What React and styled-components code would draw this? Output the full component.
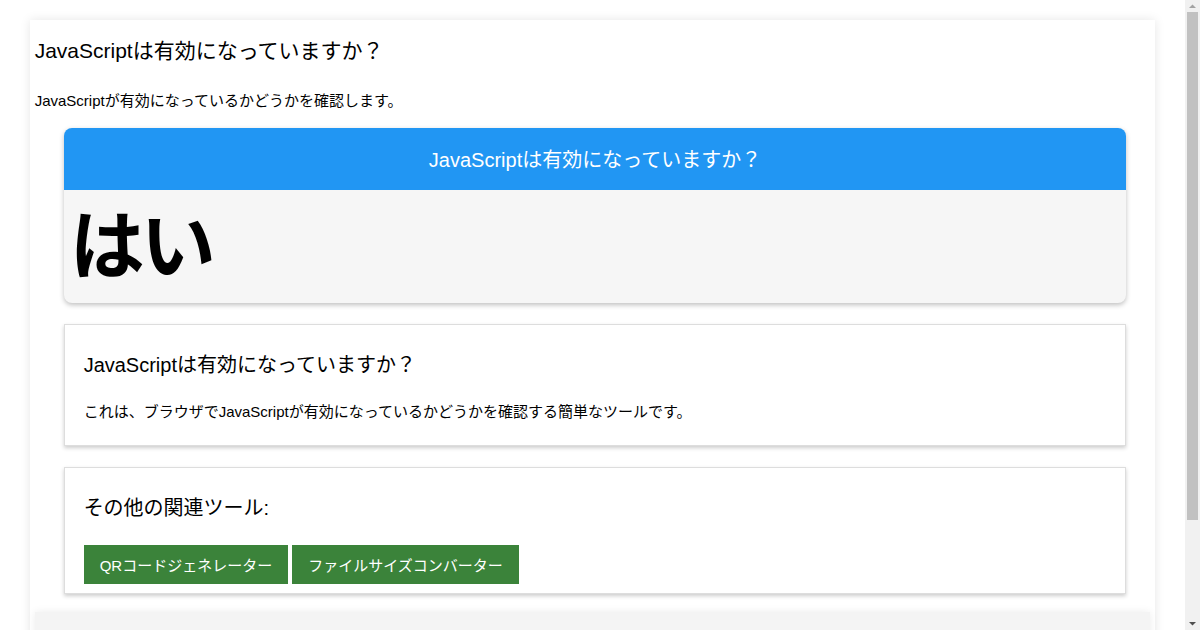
import React from 'react';
import styled, { createGlobalStyle } from 'styled-components';

const GlobalStyle = createGlobalStyle`
    html, body {
        margin: 0;
        padding: 0;
        background: #fff;
        color: #000;
        font-family: "Liberation Sans", Arial, "Noto Sans CJK JP", sans-serif;
    }
    body {
        width: calc(100% - 15px);
        overflow-x: hidden;
    }
`;

const Container = styled.div`
    width: 95%;
    margin: 20px auto 0;
    padding: 5px;
    box-sizing: border-box;
    background: #fff;
    box-shadow: 0 0 10px rgba(0, 0, 0, 0.1);
`;

const PageTitle = styled.h1`
    font-size: 21px;
    font-weight: normal;
    margin: 13px 0 0;
    line-height: 26px;
`;

const Lead = styled.p`
    font-size: 15px;
    margin: 27px 0 0;
    line-height: 20px;
`;

const Cards = styled.div`
    display: flex;
    flex-direction: column;
    gap: 21px;
    margin: 17px 24px 0 29px;
`;

const ResultCard = styled.div`
    border-radius: 8px;
    overflow: hidden;
    background: #f6f6f6;
    box-shadow: 0 2px 5px rgba(0, 0, 0, 0.25);
`;

const ResultHeader = styled.div`
    background: #2196f3;
    color: #fff;
    font-size: 20px;
    height: 62px;
    padding-bottom: 2px;
    box-sizing: border-box;
    display: flex;
    align-items: center;
    justify-content: center;
`;

const Answer = styled.div`
    height: 113px;
    box-sizing: border-box;
    padding: 1px 0 0 6px;
    font-size: 75px;
    line-height: 100px;
    font-weight: bold;
    letter-spacing: -4px;
    font-family: "Noto Sans CJK JP", sans-serif;
`;

const Box = styled.section`
    background: #fff;
    border: 1px solid #ddd;
    box-shadow: 0 2px 4px rgba(0, 0, 0, 0.2);
    padding: 28px 19px ${(p) => (p.$tight ? '9px' : '23px')};
`;

const BoxTitle = styled.h2`
    font-size: 20px;
    font-weight: normal;
    margin: 0;
    line-height: 24px;
`;

const BoxText = styled.p`
    font-size: 15px;
    margin: 25px 0 0;
    line-height: 20px;
`;

const ToolRow = styled.div`
    display: flex;
    gap: 4px;
    margin-top: 25px;
`;

const ToolButton = styled.a`
    display: inline-flex;
    align-items: center;
    height: 39px;
    padding: 0 16px;
    background: #3b833a;
    color: #fff;
    font-size: 15px;
    text-decoration: none;
`;

const Footer = styled.footer`
    margin-top: 18px;
    height: 200px;
    background: #f4f4f4;
    box-shadow: 0 0 8px rgba(0, 0, 0, 0.08);
`;

/* the browser's scrollbar, as it stands in the screenshot */
const ScrollTrack = styled.div`
    position: fixed;
    top: 0;
    right: 0;
    width: 15px;
    height: 100vh;
    background: #f1f1f1;
    display: flex;
    flex-direction: column;
    align-items: center;
`;

const ScrollArrow = styled.svg`
    width: 15px;
    height: 12px;
    flex: none;
`;

const ScrollThumb = styled.div`
    width: 11px;
    height: 508px;
    background: #c1c1c1;
`;

const ScrollSpacer = styled.div`
    flex: 1;
`;

const tools = ['QRコードジェネレーター', 'ファイルサイズコンバーター'];

const App = () => {
    return (
        <>
            <GlobalStyle />
            <Container>
                <PageTitle>JavaScriptは有効になっていますか？</PageTitle>
                <Lead>JavaScriptが有効になっているかどうかを確認します。</Lead>
                <Cards>
                    <ResultCard>
                        <ResultHeader>JavaScriptは有効になっていますか？</ResultHeader>
                        <Answer>はい</Answer>
                    </ResultCard>
                    <Box>
                        <BoxTitle>JavaScriptは有効になっていますか？</BoxTitle>
                        <BoxText>これは、ブラウザでJavaScriptが有効になっているかどうかを確認する簡単なツールです。</BoxText>
                    </Box>
                    <Box $tight>
                        <BoxTitle>その他の関連ツール:</BoxTitle>
                        <ToolRow>
                            {tools.map((t) => (
                                <ToolButton key={t} href="#">{t}</ToolButton>
                            ))}
                        </ToolRow>
                    </Box>
                </Cards>
                <Footer />
            </Container>
            <ScrollTrack>
                <ScrollArrow viewBox="0 0 15 12">
                    <path d="M4 8h7L7.5 4.5z" fill="#a3a3a3" />
                </ScrollArrow>
                <ScrollThumb />
                <ScrollSpacer />
                <ScrollArrow viewBox="0 0 15 12">
                    <path d="M4 4h7L7.5 7.5z" fill="#505050" />
                </ScrollArrow>
            </ScrollTrack>
        </>
    );
};

export default App;
